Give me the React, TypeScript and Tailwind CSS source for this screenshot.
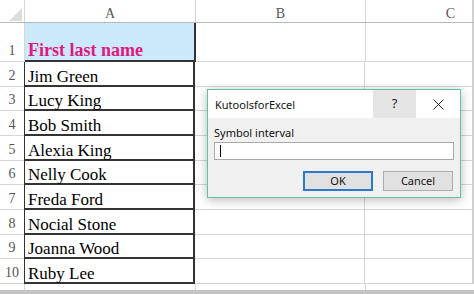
const names = [
  "Jim Green",
  "Lucy King",
  "Bob Smith",
  "Alexia King",
  "Nelly Cook",
  "Freda Ford",
  "Nocial Stone",
  "Joanna Wood",
  "Ruby Lee",
];

const serif = "font-['Liberation_Serif',serif]";

function RowHead({ n, h }: { n: string; h: string }) {
  return (
    <div
      className={`${h} w-[25px] shrink-0 flex items-end justify-center pb-[3px] border-r border-b border-[#d6d6d6] text-[14px] leading-[14px] text-[#555] ${serif}`}
    >
      {n}
    </div>
  );
}

export default function App() {
  return (
    <div className="relative w-[474px] h-[294px] bg-white overflow-hidden flex flex-col">
      {/* column headers */}
      <div className="flex h-[23px] shrink-0 border-b border-[#b8b8b8]">
        <div className="w-[25px] shrink-0 border-r border-[#d6d6d6] relative">
          <svg className="absolute left-[9px] top-[8px]" width="13" height="13" viewBox="0 0 13 13">
            <polygon points="13,0 13,13 0,13" fill="#dcdcdc" />
          </svg>
        </div>
        <div className={`w-[171px] shrink-0 border-r border-[#d6d6d6] flex items-end pb-[1px] justify-center text-[14px] leading-[14px] text-[#555] ${serif}`}>
          A
        </div>
        <div className={`w-[170px] shrink-0 border-r border-[#d6d6d6] flex items-end pb-[1px] justify-center text-[14px] leading-[14px] text-[#555] ${serif}`}>
          B
        </div>
        <div className={`flex-1 flex items-end pb-[1px] justify-end pr-[17px] text-[14px] leading-[14px] text-[#555] ${serif}`}>
          C
        </div>
        <div className="w-[2px] bg-[#d0d0d0]" />
      </div>

      {/* row 1 */}
      <div className="flex h-[39px] shrink-0">
        <RowHead n="1" h="h-[39px]" />
        <div
          className={`w-[171px] shrink-0 bg-[#cce8fb] border-r-2 border-b-2 border-[#333] flex items-end pl-[3px] pb-[1px] text-[18px] leading-[18px] font-bold text-[#e0197d] ${serif}`}
        >
          First last name
        </div>
        <div className="w-[170px] shrink-0 border-r border-b border-[#d6d6d6]" />
        <div className="flex-1 border-b border-[#d6d6d6]" />
        <div className="w-[2px] bg-[#d0d0d0]" />
      </div>

      {names.map((name, i) => (
        <div key={name} className="flex h-[24.67px] shrink-0">
          <RowHead n={String(i + 2)} h="h-[24.67px]" />
          <div
            className={`w-[171px] shrink-0 border-l border-r-2 border-b-2 border-[#333] -ml-px flex items-end pl-[3px] pb-[1px] text-[17px] text-black leading-[15px] ${serif}`}
          >
            {name}
          </div>
          <div className="w-[170px] shrink-0 border-r border-b border-[#d6d6d6]" />
          <div className="flex-1 border-b border-[#d6d6d6]" />
          <div className="w-[2px] bg-[#d0d0d0]" />
        </div>
      ))}

      {/* partial row 11 */}
      <div className="flex flex-1">
        <div className="w-[25px] border-r border-[#d6d6d6]" />
        <div className="w-[171px] border-r border-[#d6d6d6]" />
        <div className="w-[170px] border-r border-[#d6d6d6]" />
        <div className="flex-1" />
      </div>
      <div className="h-[4px] shrink-0 bg-[#c4c4c4]" />

      {/* dialog */}
      <div className="absolute left-[207px] top-[89px] w-[254px] h-[109px] border border-[#5ec39a] bg-[#f0f0f0] shadow-[0_2px_10px_rgba(0,0,0,0.28)] flex flex-col font-['Noto_Sans',sans-serif]">
        <div className="h-[28px] bg-white flex items-center shrink-0">
          <div className="flex-1 pl-[7px] pt-[3px] text-[11px] text-[#111]">KutoolsforExcel</div>
          <div className="w-[43px] h-full bg-[#e5e5e5] flex items-center justify-center text-[13px] text-[#222]">?</div>
          <div className="w-[44px] h-full flex items-center justify-center">
            <svg width="11" height="11" viewBox="0 0 11 11">
              <path d="M0.5 0.5 L10.5 10.5 M10.5 0.5 L0.5 10.5" stroke="#222" strokeWidth="1" />
            </svg>
          </div>
        </div>
        <div className="flex flex-col px-[6px] pt-[7px]">
          <div className="text-[11px] leading-[16px] text-[#111]">Symbol interval</div>
          <div className="mt-[1px] h-[18px] bg-white border border-[#a9a9a9] flex items-center pl-[5px]">
            <div className="w-px h-[12px] bg-black" />
          </div>
          <div className="flex justify-end gap-[10px] mt-[11px] pr-px">
            <div className="w-[70px] h-[20px] bg-[#e1e1e1] border-2 border-[#2a7bd0] flex items-center justify-center text-[11px] text-[#111]">
              OK
            </div>
            <div className="w-[70px] h-[20px] bg-[#e1e1e1] border border-[#adadad] flex items-center justify-center text-[11px] text-[#111]">
              Cancel
            </div>
          </div>
        </div>
      </div>
    </div>
  );
}
